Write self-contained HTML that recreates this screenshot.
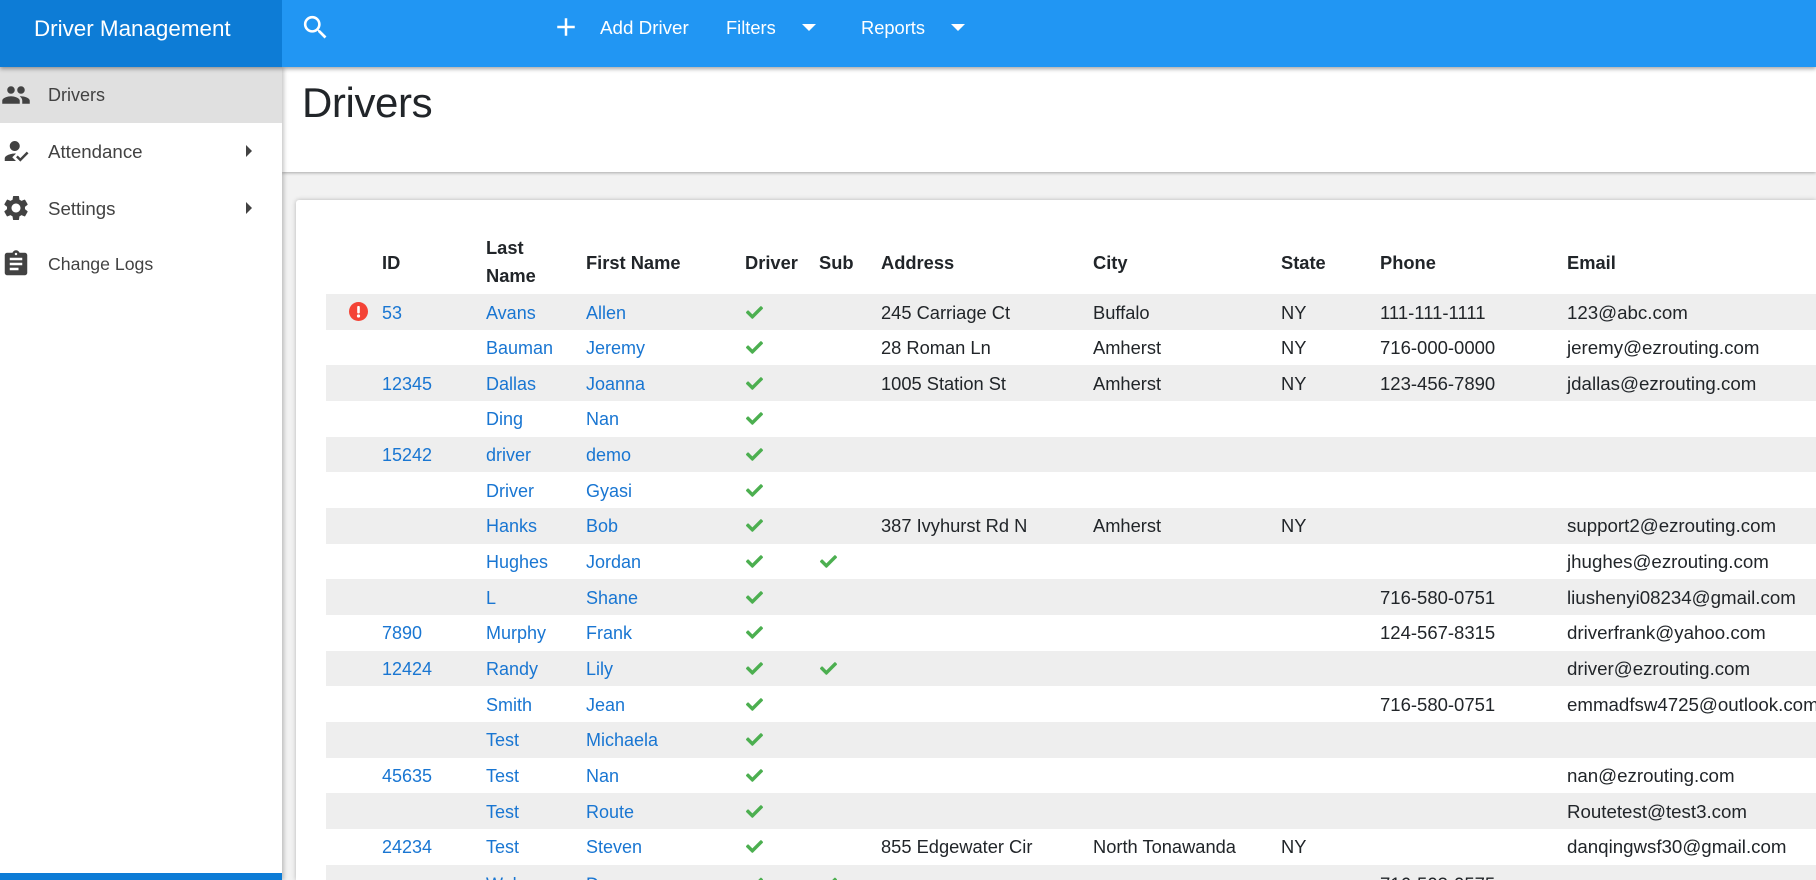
<!DOCTYPE html>
<html><head><meta charset="utf-8"><title>Drivers</title>
<style>
*{box-sizing:border-box}
html,body{margin:0;padding:0;width:1816px;height:880px;overflow:hidden;background:#f2f2f2;font-family:"Liberation Sans",Arial,sans-serif;font-size:18px;color:#212529}
#wrap{position:absolute;left:0;top:0;width:1816px;height:880px;overflow:hidden;background:#f2f2f2}
.abs,.top,.side,.brand,.head,.card,.s,.t,.hc,.c{position:absolute}
.top{left:0;top:0;width:1816px;height:67px;background:#2196f3;box-shadow:0 2px 4px rgba(0,0,0,.35);z-index:5}
.brand{left:0;top:0;width:282px;height:67px;background:#0d7cd6;color:#fff;font-size:22.4px;line-height:58px;padding-left:34px;z-index:6}
.top .t{color:#fff;font-size:18.3px;line-height:22px;top:17px;white-space:nowrap}
.caret{position:absolute;top:24px;width:0;height:0;border-left:7.5px solid transparent;border-right:7.5px solid transparent;border-top:7.5px solid #fff}
.side{left:0;top:67px;width:282px;height:813px;background:#fff;box-shadow:2px 0 4px rgba(0,0,0,.22);z-index:4}
.mi{position:absolute;left:0;width:282px;height:56px;color:#424242;font-size:18px;line-height:56px;padding-left:48px}
.mi svg{position:absolute;left:1px;top:13px;width:30px;height:30px;fill:#424242}
.ar{position:absolute;left:246px;top:22px;width:0;height:0;border-top:6px solid transparent;border-bottom:6px solid transparent;border-left:6px solid #424242}
.bar{position:absolute;left:0;bottom:0;width:282px;height:7px;background:#0d7cd6}
.head{left:282px;top:67px;width:1534px;height:105px;background:#fff;box-shadow:0 1px 3px rgba(0,0,0,.3);z-index:2}
.head h1{position:absolute;left:20px;top:11px;margin:0;font-size:42px;letter-spacing:-.4px;line-height:50px;font-weight:400;color:#212529}
.card{left:296px;top:200px;width:1520px;height:680px;overflow:visible;background:#fff;border-radius:3px 0 0 0;box-shadow:0 0 5px rgba(0,0,0,.25)}
.hc{font-weight:700;font-size:18.3px;line-height:29px;color:#212529;top:48px;white-space:nowrap}
#rows{position:absolute;left:30px;top:94px;width:1490px;height:586px;overflow:hidden}
.r{position:relative;height:35.67px;line-height:35.67px;white-space:nowrap}
.r:nth-child(odd){background:#eee}
.c{top:.5px;font-size:18.3px;color:#212529}
.a{color:#1976d2;font-size:18px;top:1.5px}
.i{left:56px}.l{left:160px}.f{left:260px}.ad{left:555px}.ct{left:767px}.st{left:955px}.ph{left:1054px;font-size:18.5px}.em{left:1241px;font-size:18.7px}
.ck{position:absolute;top:9.5px;width:17px;height:17px;fill:#4caf50}
.d{left:420px}.u{left:494px}
.r:last-child .c,.r:last-child .ck{transform:translateY(1.5px)}
</style></head><body>
<div id="wrap">
<div class="top">
<svg class="abs" style="left:300px;top:12px" width="31" height="31" viewBox="0 0 24 24" fill="#fff"><path d="M15.5 14h-.79l-.28-.27C15.41 12.59 16 11.11 16 9.5 16 5.91 13.09 3 9.5 3S3 5.91 3 9.5 5.91 16 9.5 16c1.61 0 3.09-.59 4.23-1.57l.27.28v.79l5 4.99L20.49 19l-4.99-5zm-6 0C7.01 14 5 11.99 5 9.5S7.01 5 9.5 5 14 7.01 14 9.5 11.99 14 9.5 14z"/></svg>
<svg class="abs" style="left:551px;top:12px" width="30" height="30" viewBox="0 0 24 24" fill="#fff"><path d="M19 13h-6v6h-2v-6H5v-2h6V5h2v6h6v2z"/></svg>
<span class="t" style="left:600px;font-size:18.8px">Add Driver</span>
<span class="t" style="left:726px">Filters</span>
<span class="caret" style="left:802px"></span>
<span class="t" style="left:861px">Reports</span>
<span class="caret" style="left:951px"></span>
</div>
<div class="brand">Driver Management</div>
<div class="side">
<div class="mi" style="top:0;background:#e0e0e0"><svg viewBox="0 0 24 24"><path d="M16 11c1.66 0 2.99-1.34 2.99-3S17.66 5 16 5c-1.66 0-3 1.34-3 3s1.34 3 3 3zm-8 0c1.66 0 2.99-1.34 2.99-3S9.66 5 8 5C6.34 5 5 6.34 5 8s1.34 3 3 3zm0 2c-2.33 0-7 1.17-7 3.5V19h14v-2.5c0-2.33-4.67-3.5-7-3.5zm8 0c-.29 0-.62.02-.97.05 1.16.84 1.97 1.97 1.97 3.45V19h6v-2.5c0-2.33-4.67-3.5-7-3.5z"/></svg>Drivers</div>
<div class="mi" style="top:56px;line-height:58px;font-size:18.7px"><svg viewBox="0 0 24 24"><path d="M9 17l3-2.94c-.39-.04-.68-.06-1-.06-2.67 0-8 1.34-8 4v2h9l-3-3zm2-5c2.21 0 4-1.79 4-4s-1.79-4-4-4-4 1.79-4 4 1.79 4 4 4M15.47 20.5L12 17l1.4-1.41 2.07 2.08 5.13-5.17 1.4 1.41z"/></svg>Attendance<span class="ar"></span></div>
<div class="mi" style="top:113px;line-height:58px;font-size:18.7px"><svg viewBox="0 0 24 24"><path d="M19.14 12.94c.04-.3.06-.61.06-.94 0-.32-.02-.64-.07-.94l2.03-1.58c.18-.14.23-.41.12-.61l-1.92-3.32c-.12-.22-.37-.29-.59-.22l-2.39.96c-.5-.38-1.03-.7-1.62-.94l-.36-2.54c-.04-.24-.24-.41-.48-.41h-3.84c-.24 0-.43.17-.47.41l-.36 2.54c-.59.24-1.13.57-1.62.94l-2.39-.96c-.22-.08-.47 0-.59.22L2.74 8.87c-.12.21-.08.47.12.61l2.03 1.58c-.05.3-.09.63-.09.94s.02.64.07.94l-2.03 1.58c-.18.14-.23.41-.12.61l1.92 3.32c.12.22.37.29.59.22l2.39-.96c.5.38 1.03.7 1.62.94l.36 2.54c.05.24.24.41.48.41h3.84c.24 0 .44-.17.47-.41l.36-2.54c.59-.24 1.13-.56 1.62-.94l2.39.96c.22.08.47 0 .59-.22l1.92-3.32c.12-.22.07-.47-.12-.61l-2.01-1.58zM12 15.6c-1.98 0-3.6-1.62-3.6-3.6s1.62-3.6 3.6-3.6 3.6 1.62 3.6 3.6-1.62 3.6-3.6 3.6z"/></svg>Settings<span class="ar"></span></div>
<div class="mi" style="top:169px;font-size:17.7px"><svg viewBox="0 0 24 24"><path d="M19 3h-4.18C14.4 1.84 13.3 1 12 1c-1.3 0-2.4.84-2.82 2H5c-1.1 0-2 .9-2 2v14c0 1.1.9 2 2 2h14c1.1 0 2-.9 2-2V5c0-1.1-.9-2-2-2zm-7 0c.55 0 1 .45 1 1s-.45 1-1 1-1-.45-1-1 .45-1 1-1zm2 14H7v-2h7v2zm3-4H7v-2h10v2zm0-4H7V7h10v2z"/></svg>Change Logs</div>
<div class="bar"></div>
</div>
<div class="head"><h1>Drivers</h1></div>
<div class="card">
<span class="hc" style="left:86px">ID</span>
<span class="hc" style="left:190px;top:34px;line-height:28px">Last<br>Name</span>
<span class="hc" style="left:290px">First Name</span>
<span class="hc" style="left:449px">Driver</span>
<span class="hc" style="left:523px">Sub</span>
<span class="hc" style="left:585px">Address</span>
<span class="hc" style="left:797px">City</span>
<span class="hc" style="left:985px">State</span>
<span class="hc" style="left:1084px">Phone</span>
<span class="hc" style="left:1271px">Email</span>
<svg width="0" height="0" style="position:absolute"><defs><path id="k" d="M173.898 439.404l-166.4-166.4c-9.997-9.997-9.997-26.206 0-36.204l36.203-36.204c9.997-9.998 26.207-9.998 36.204 0L192 312.69 432.095 72.596c9.997-9.997 26.207-9.997 36.204 0l36.203 36.204c9.997 9.997 9.997 26.206 0 36.204l-294.4 294.401c-9.998 9.997-26.207 9.997-36.204-.001z"/></defs></svg>
<div id="rows">
<div class="r"><svg class="abs" style="left:23px;top:8px" width="19" height="19" viewBox="0 0 19 19"><circle cx="9.5" cy="9.5" r="9.5" fill="#f44336"/><rect x="8.2" y="4" width="2.6" height="7.5" rx="1" fill="#fff"/><circle cx="9.5" cy="14" r="1.6" fill="#fff"/></svg><span class="c a i">53</span><span class="c a l">Avans</span><span class="c a f">Allen</span><svg class="ck d" viewBox="0 0 512 512"><use href="#k"/></svg><span class="c ad">245 Carriage Ct</span><span class="c ct">Buffalo</span><span class="c st">NY</span><span class="c ph">111-111-1111</span><span class="c em">123@abc.com</span></div>
<div class="r"><span class="c a l">Bauman</span><span class="c a f">Jeremy</span><svg class="ck d" viewBox="0 0 512 512"><use href="#k"/></svg><span class="c ad">28 Roman Ln</span><span class="c ct">Amherst</span><span class="c st">NY</span><span class="c ph">716-000-0000</span><span class="c em">jeremy@ezrouting.com</span></div>
<div class="r"><span class="c a i">12345</span><span class="c a l">Dallas</span><span class="c a f">Joanna</span><svg class="ck d" viewBox="0 0 512 512"><use href="#k"/></svg><span class="c ad">1005 Station St</span><span class="c ct">Amherst</span><span class="c st">NY</span><span class="c ph">123-456-7890</span><span class="c em">jdallas@ezrouting.com</span></div>
<div class="r"><span class="c a l">Ding</span><span class="c a f">Nan</span><svg class="ck d" viewBox="0 0 512 512"><use href="#k"/></svg></div>
<div class="r"><span class="c a i">15242</span><span class="c a l">driver</span><span class="c a f">demo</span><svg class="ck d" viewBox="0 0 512 512"><use href="#k"/></svg></div>
<div class="r"><span class="c a l">Driver</span><span class="c a f">Gyasi</span><svg class="ck d" viewBox="0 0 512 512"><use href="#k"/></svg></div>
<div class="r"><span class="c a l">Hanks</span><span class="c a f">Bob</span><svg class="ck d" viewBox="0 0 512 512"><use href="#k"/></svg><span class="c ad">387 Ivyhurst Rd N</span><span class="c ct">Amherst</span><span class="c st">NY</span><span class="c em">support2@ezrouting.com</span></div>
<div class="r"><span class="c a l">Hughes</span><span class="c a f">Jordan</span><svg class="ck d" viewBox="0 0 512 512"><use href="#k"/></svg><svg class="ck u" viewBox="0 0 512 512"><use href="#k"/></svg><span class="c em">jhughes@ezrouting.com</span></div>
<div class="r"><span class="c a l">L</span><span class="c a f">Shane</span><svg class="ck d" viewBox="0 0 512 512"><use href="#k"/></svg><span class="c ph">716-580-0751</span><span class="c em">liushenyi08234@gmail.com</span></div>
<div class="r"><span class="c a i">7890</span><span class="c a l">Murphy</span><span class="c a f">Frank</span><svg class="ck d" viewBox="0 0 512 512"><use href="#k"/></svg><span class="c ph">124-567-8315</span><span class="c em">driverfrank@yahoo.com</span></div>
<div class="r"><span class="c a i">12424</span><span class="c a l">Randy</span><span class="c a f">Lily</span><svg class="ck d" viewBox="0 0 512 512"><use href="#k"/></svg><svg class="ck u" viewBox="0 0 512 512"><use href="#k"/></svg><span class="c em">driver@ezrouting.com</span></div>
<div class="r"><span class="c a l">Smith</span><span class="c a f">Jean</span><svg class="ck d" viewBox="0 0 512 512"><use href="#k"/></svg><span class="c ph">716-580-0751</span><span class="c em">emmadfsw4725@outlook.com</span></div>
<div class="r"><span class="c a l">Test</span><span class="c a f">Michaela</span><svg class="ck d" viewBox="0 0 512 512"><use href="#k"/></svg></div>
<div class="r"><span class="c a i">45635</span><span class="c a l">Test</span><span class="c a f">Nan</span><svg class="ck d" viewBox="0 0 512 512"><use href="#k"/></svg><span class="c em">nan@ezrouting.com</span></div>
<div class="r"><span class="c a l">Test</span><span class="c a f">Route</span><svg class="ck d" viewBox="0 0 512 512"><use href="#k"/></svg><span class="c em">Routetest@test3.com</span></div>
<div class="r"><span class="c a i">24234</span><span class="c a l">Test</span><span class="c a f">Steven</span><svg class="ck d" viewBox="0 0 512 512"><use href="#k"/></svg><span class="c ad">855 Edgewater Cir</span><span class="c ct">North Tonawanda</span><span class="c st">NY</span><span class="c em">danqingwsf30@gmail.com</span></div>
<div class="r"><span class="c a l">Weber</span><span class="c a f">Dean</span><svg class="ck d" viewBox="0 0 512 512"><use href="#k"/></svg><svg class="ck u" viewBox="0 0 512 512"><use href="#k"/></svg><span class="c ph">716-503-0575</span></div>
</div>
</div>
</div>
</body></html>
